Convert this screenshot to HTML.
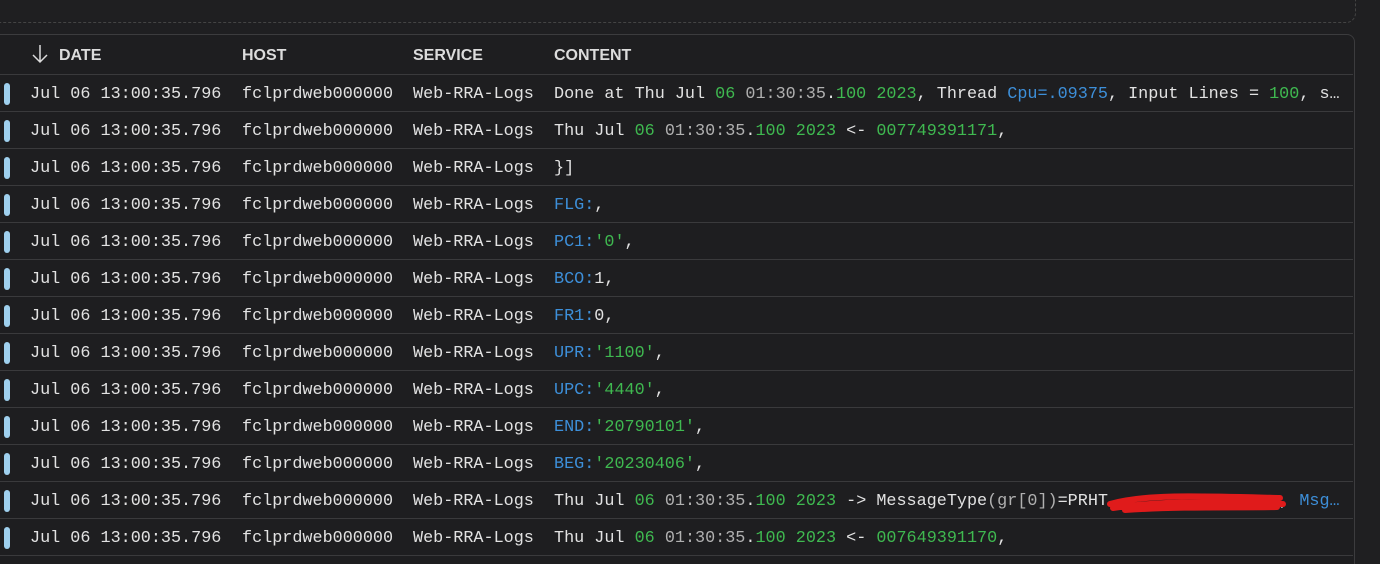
<!DOCTYPE html><html><head><style>
html,body{margin:0;width:1380px;height:564px;overflow:hidden;}
body{background:#1f1f21;position:relative;font-family:"Liberation Mono",monospace;}
.dash{position:absolute;left:-10px;top:-20px;width:1364px;height:41px;border:1px dashed #444;border-radius:10px;}
.panel{position:absolute;left:-10px;top:34px;width:1363px;height:540px;border:1px solid #3c3c3e;border-radius:8px;background:#1e1e20;}
.hdr{position:absolute;top:34px;height:40px;left:0;width:1353px;border-bottom:1px solid #3a3a3c;font:bold 16px "Liberation Sans",sans-serif;color:#dcdcdc;}
.hdr span{position:absolute;top:13px;}
.row{position:absolute;left:0;width:1353px;height:36px;border-bottom:1px solid #3a3a3c;color:#e2e2e2;font-size:16.8px;white-space:nowrap;}
.row span.c{position:absolute;top:10px;}
.m{position:absolute;left:4px;top:8px;width:6px;height:22px;border-radius:3px;background:#9fd0ee;}
.g{color:#3fb950}.b{color:#3d8fd9}.d{color:#b0b0b0}
.ct{width:790px;overflow:hidden;text-overflow:ellipsis;}
</style></head><body>
<div class="dash"></div>
<div class="panel"></div>
<div class="hdr"><svg style="position:absolute;left:31px;top:10px" width="18" height="20" viewBox="0 0 18 20"><path d="M9 1 V18 M2 11 L9 18 L16 11" stroke="#dcdcdc" stroke-width="1.5" fill="none"/></svg><span style="left:59px">DATE</span><span style="left:242px">HOST</span><span style="left:413px">SERVICE</span><span style="left:554px">CONTENT</span></div>
<div id="rows"></div>
<script>
var c=[
'Done at Thu Jul <span class=g>06</span> <span class=d>01:30:35</span>.<span class=g>100 2023</span>, Thread <span class=b>Cpu=.09375</span>, Input Lines = <span class=g>100</span>, s…',
'Thu Jul <span class=g>06</span> <span class=d>01:30:35</span>.<span class=g>100 2023</span> &lt;- <span class=g>007749391171</span>,',
'}]',
'<span class=b>FLG:</span>,',
'<span class=b>PC1:</span><span class=g>\'0\'</span>,',
'<span class=b>BCO:</span>1,',
'<span class=b>FR1:</span>0,',
'<span class=b>UPR:</span><span class=g>\'1100\'</span>,',
'<span class=b>UPC:</span><span class=g>\'4440\'</span>,',
'<span class=b>END:</span><span class=g>\'20790101\'</span>,',
'<span class=b>BEG:</span><span class=g>\'20230406\'</span>,',
'Thu Jul <span class=g>06</span> <span class=d>01:30:35</span>.<span class=g>100 2023</span> -&gt; MessageType<span class=d>(gr[0])</span>=PRHT<span style="color:#1e1e20">xxxxxxxxxxxxxxxxx</span>, <span class=b>Msg…</span>',
'Thu Jul <span class=g>06</span> <span class=d>01:30:35</span>.<span class=g>100 2023</span> &lt;- <span class=g>007649391170</span>,'];
var h='';for(var i=0;i<c.length;i++){h+='<div class="row" style="top:'+(75+i*37)+'px"><div class="m"></div><span class="c" style="left:30px">Jul 06 13:00:35.796</span><span class="c" style="left:242px">fclprdweb000000</span><span class="c" style="left:413px">Web-RRA-Logs</span><span class="c ct" style="left:554px">'+c[i]+'</span></div>';}
document.getElementById('rows').innerHTML=h;
</script>
<svg style="position:absolute;left:1105px;top:490px" width="185" height="25"><path d="M5 14 C40 4 90 6 175 8 M8 18 C60 10 120 12 178 14 M20 20 C80 16 140 18 172 17" stroke="#e01b1b" stroke-width="6" fill="none" stroke-linecap="round"/></svg>
</body></html>
